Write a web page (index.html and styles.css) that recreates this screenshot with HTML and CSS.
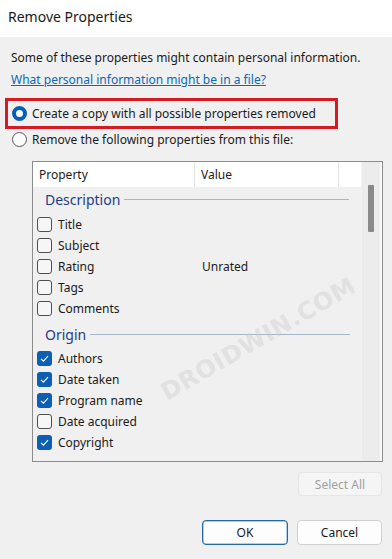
FILE: index.html
```html
<!DOCTYPE html>
<html>
<head>
<meta charset="utf-8">
<link rel="stylesheet" href="styles.css">
</head>
<body>
<div class="dialog">
  <div class="titlebar">Remove Properties</div>
  <div class="content">
    <p class="info">Some of these properties might contain personal information.</p>
    <a class="link" href="#">What personal information might be in a file?</a>
    <div class="options">
      <label class="radio-row highlighted"><span class="radio checked"></span><span>Create a copy with all possible properties removed</span></label>
      <label class="radio-row"><span class="radio"></span><span>Remove the following properties from this file:</span></label>
    </div>
    <div class="listbox">
      <div class="list-main">
        <div class="list-header">
          <div class="col col-prop">Property</div>
          <div class="col col-val">Value</div>
          <div class="col col-rest"></div>
        </div>
        <div class="list-body">
          <div class="group"><span class="group-name">Description</span><span class="group-line"></span></div>
          <div class="item"><span class="cb"></span><span class="name">Title</span><span class="val"></span></div>
          <div class="item"><span class="cb"></span><span class="name">Subject</span><span class="val"></span></div>
          <div class="item"><span class="cb"></span><span class="name">Rating</span><span class="val">Unrated</span></div>
          <div class="item"><span class="cb"></span><span class="name">Tags</span><span class="val"></span></div>
          <div class="item"><span class="cb"></span><span class="name">Comments</span><span class="val"></span></div>
          <div class="group group-2"><span class="group-name">Origin</span><span class="group-line"></span></div>
          <div class="item"><span class="cb on"><svg viewBox="0 0 15 15" width="15" height="15"><path d="M4 7.8 L6.4 10.1 L11 5.2" fill="none" stroke="#fff" stroke-width="1.1"/></svg></span><span class="name">Authors</span><span class="val"></span></div>
          <div class="item"><span class="cb on"><svg viewBox="0 0 15 15" width="15" height="15"><path d="M4 7.8 L6.4 10.1 L11 5.2" fill="none" stroke="#fff" stroke-width="1.1"/></svg></span><span class="name">Date taken</span><span class="val"></span></div>
          <div class="item"><span class="cb on"><svg viewBox="0 0 15 15" width="15" height="15"><path d="M4 7.8 L6.4 10.1 L11 5.2" fill="none" stroke="#fff" stroke-width="1.1"/></svg></span><span class="name">Program name</span><span class="val"></span></div>
          <div class="item"><span class="cb"></span><span class="name">Date acquired</span><span class="val"></span></div>
          <div class="item"><span class="cb on"><svg viewBox="0 0 15 15" width="15" height="15"><path d="M4 7.8 L6.4 10.1 L11 5.2" fill="none" stroke="#fff" stroke-width="1.1"/></svg></span><span class="name">Copyright</span><span class="val"></span></div>
        </div>
      </div>
      <div class="scrollbar"><div class="thumb"></div></div>
    </div>
    <div class="select-row"><button class="btn disabled">Select All</button></div>
    <div class="footer">
      <button class="btn primary">OK</button>
      <button class="btn">Cancel</button>
    </div>
  </div>
  <div class="watermark">DROIDWIN.COM</div>
</div>
</body>
</html>
```
FILE: styles.css
```css
* { box-sizing: border-box; }
html, body { margin: 0; padding: 0; }
body {
  width: 392px;
  height: 559px;
  overflow: hidden;
  background: #f0f0f0;
  font-family: "Noto Sans", "Open Sans", sans-serif;
  font-size: 12px;
  color: #1a1a1a;
}
.dialog {
  position: relative;
  width: 392px;
  height: 559px;
  background: #f0f0f0;
}
.titlebar {
  height: 37px;
  background: #ffffff;
  padding: 7px 0 0 8px;
  font-size: 14px;
  line-height: 20px;
  color: #1a1a1a;
}
.content {
  padding: 0 10px 0 11px;
  display: flex;
  flex-direction: column;
}
.info {
  margin: 12px 0 0 0;
  line-height: 18px;
}
.link {
  display: block;
  margin-top: 4px;
  line-height: 18px;
  color: #0a68b8;
  text-decoration: underline;
}
.options {
  margin-top: 9px;
  margin-left: -6px;
  display: flex;
  flex-direction: column;
}
.radio-row {
  display: flex;
  align-items: center;
  gap: 5px;
  height: 25px;
  padding-left: 4px;
  border: 3px solid transparent;
  width: 333px;
}
.radio-row.highlighted {
  height: 31px;
  border-color: #d71921;
}
.radio-row + .radio-row {
  margin-top: -2px;
  padding-left: 7px;
  border: 0;
}
.radio {
  width: 15px;
  height: 15px;
  border-radius: 50%;
  border: 1px solid #5a5a5a;
  background: #fbfbfb;
  flex: none;
}
.radio.checked {
  border: 4px solid #0a5fb4;
  background: #ffffff;
}
.listbox {
  margin: 9px 0 0 21px;
  height: 301px;
  width: 351px;
  border: 1px solid #8c8c8c;
  display: flex;
  background: #f0f0f0;
}
.list-main {
  flex: 1;
  display: flex;
  flex-direction: column;
}
.list-header {
  display: flex;
  height: 25px;
  background: #ffffff;
}
.col {
  line-height: 25px;
  padding-left: 6px;
  border-right: 1px solid #e5e5e5;
}
.col-prop { width: 162px; }
.col-val { width: 144px; }
.col-rest { flex: 1; border-right: 0; }
.list-body {
  display: flex;
  flex-direction: column;
}
.group {
  display: flex;
  align-items: center;
  height: 26px;
  padding-left: 12px;
  padding-bottom: 2px;
  margin-bottom: 1px;
  color: #1e3c8a;
  font-size: 14px;
}
.group-2 { margin-top: 5px; height: 24px; padding-bottom: 3px; margin-bottom: 0; }
.group-line {
  flex: none;
  width: 225px;
  height: 1px;
  background: #a7b6c8;
  margin-left: 4px;
}
.group-2 .group-line { width: 260px; }
.item {
  display: flex;
  align-items: center;
  height: 21px;
  padding-left: 4px;
}
.cb {
  width: 15px;
  height: 15px;
  border: 1px solid #4f4f4f;
  border-radius: 3px;
  background: #f6f6f6;
  flex: none;
  display: flex;
}
.cb.on {
  border: 0;
  background: #0d5fb3;
}
.name {
  margin-left: 6px;
  width: 144px;
}
.val { margin-left: 0; }
.scrollbar {
  width: 21px;
  background: #ececec;
  border-left: 1px solid #f3f3f3;
  border-right: 2px solid #fafafa;
  display: flex;
  justify-content: center;
  padding-top: 23px;
}
.thumb {
  width: 6px;
  height: 47px;
  background: #8a8a8a;
  border-radius: 1px;
}
.select-row {
  display: flex;
  justify-content: flex-end;
  margin-top: 10px;
  padding-right: 0;
}
.btn {
  font-family: inherit;
  font-size: 12px;
  width: 85px;
  height: 25px;
  border: 1px solid #d0d0d0;
  border-radius: 4px;
  background: #fdfdfd;
  color: #1a1a1a;
  padding: 0;
}
.btn.disabled {
  width: 84px;
  height: 24px;
  background: #f5f5f5;
  border-color: #e6e6e6;
  color: #a0a0a0;
}
.footer {
  display: flex;
  justify-content: flex-end;
  gap: 9px;
  margin-top: 24px;
}
.btn.primary {
  width: 86px;
  border-color: #2467a6;
  box-shadow: inset 0 0 0 0.5px #6c9ccb;
}
.watermark {
  position: absolute;
  left: 163px;
  top: 380px;
  font-size: 24px;
  font-weight: bold;
  font-family: "DejaVu Sans", sans-serif;
  letter-spacing: 0.5px;
  color: rgba(200, 200, 200, 0.4);
  transform: rotate(-30deg);
  transform-origin: left center;
  pointer-events: none;
}
```
